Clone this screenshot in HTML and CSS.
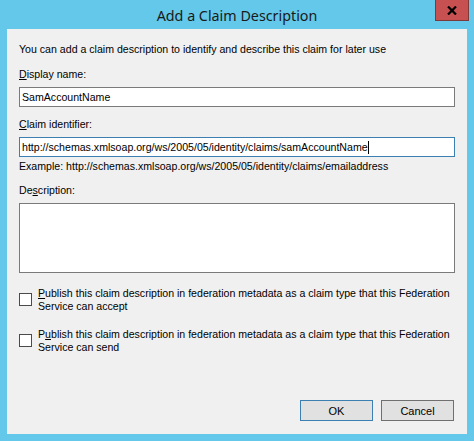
FILE: index.html
```html
<!DOCTYPE html>
<html>
<head>
<meta charset="utf-8">
<link rel="stylesheet" href="styles.css">
</head>
<body>
<div class="window">
  <div class="titlebar">
    <span class="title">Add a Claim Description</span>
    <button class="close" aria-label="Close">
      <svg width="10" height="9" viewBox="0 0 10 9"><path d="M1 0.5 L9 8.5 M9 0.5 L1 8.5" stroke="#000" stroke-width="2.2" fill="none"/></svg>
    </button>
  </div>
  <div class="client">
    <p class="intro">You can add a claim description to identify and describe this claim for later use</p>
    <label class="label"><u>D</u>isplay name:</label>
    <div class="field">SamAccountName</div>
    <label class="label label-gap"><u>C</u>laim identifier:</label>
    <div class="field focused">http://schemas.xmlsoap.org/ws/2005/05/identity/claims/samAccountName<span class="caret"></span></div>
    <p class="example">Example: http://schemas.xmlsoap.org/ws/2005/05/identity/claims/emailaddress</p>
    <label class="label label-gap">De<u>s</u>cription:</label>
    <div class="area"></div>
    <div class="check first">
      <span class="box"></span>
      <span class="check-text"><u>P</u>ublish this claim description in federation metadata as a claim type that this Federation Service can accept</span>
    </div>
    <div class="check second">
      <span class="box"></span>
      <span class="check-text">P<u>u</u>blish this claim description in federation metadata as a claim type that this Federation Service can send</span>
    </div>
    <div class="buttons">
      <button class="btn default">OK</button>
      <button class="btn">Cancel</button>
    </div>
  </div>
</div>
</body>
</html>
```

FILE: styles.css
```css
* { box-sizing: border-box; }
html, body { margin: 0; padding: 0; }
body { width: 474px; height: 441px; overflow: hidden; }

.window {
  width: 474px;
  height: 441px;
  background: #63c8e9;
  display: flex;
  flex-direction: column;
}

.titlebar {
  position: relative;
  height: 29px;
  display: flex;
  align-items: center;
  justify-content: center;
}
.title {
  font-family: "Noto Sans", "Open Sans", sans-serif;
  font-size: 14.3px;
  color: #1a1a1a;
  margin-top: 1px;
}
.close {
  position: absolute;
  top: -1px;
  left: 435px;
  width: 34px;
  height: 22px;
  margin: 0;
  padding: 0;
  background: #c75050;
  border: 1px solid #7d3a3a;
  border-top: none;
  display: flex;
  align-items: center;
  justify-content: center;
}
.close svg { display: block; margin-top: 1px; }

.client {
  margin: 0 7px;
  height: 405px;
  background: #f0f0f0;
  padding: 14px 13px 13px 12px;
  display: flex;
  flex-direction: column;
  font-family: "Liberation Sans", Arial, sans-serif;
  font-size: 10.6px;
  line-height: 13px;
  color: #000;
}

.intro { margin: 0; }
.label { display: block; margin-top: 12px; }
.label-gap { margin-top: 11px; }
.field {
  margin-top: 6px;
  width: 436px;
  height: 20px;
  border: 1px solid #7a7a7a;
  background: #fff;
  padding: 3px 2px 0;
  white-space: nowrap;
  overflow: hidden;
}
.field.focused { border-color: #3c7fb1; }
.caret {
  display: inline-block;
  width: 1px;
  height: 13px;
  background: #000;
  vertical-align: -3px;
}
.example { margin: 3px 0 0; }
.area {
  margin-top: 6px;
  width: 436px;
  height: 70px;
  border: 1px solid #7a7a7a;
  background: #fff;
}

.check {
  display: flex;
  align-items: flex-start;
  gap: 6px;
  width: 436px;
}
.check.first { margin-top: 14px; }
.check.second { margin-top: 15px; }
.box {
  flex: none;
  width: 13px;
  height: 13px;
  margin-top: 6px;
  border: 1px solid #4a4a4a;
  background: #fff;
}
.check-text { flex: 1; }

.buttons {
  margin-top: auto;
  display: flex;
  justify-content: flex-end;
  gap: 8px;
}
.btn {
  width: 73px;
  height: 21px;
  margin: 0;
  padding: 0;
  background: #e1e1e1;
  border: 1px solid #707070;
  font-family: "Liberation Sans", Arial, sans-serif;
  font-size: 11px;
  color: #000;
}
.btn.default { border-color: #3c7fb1; }
```
